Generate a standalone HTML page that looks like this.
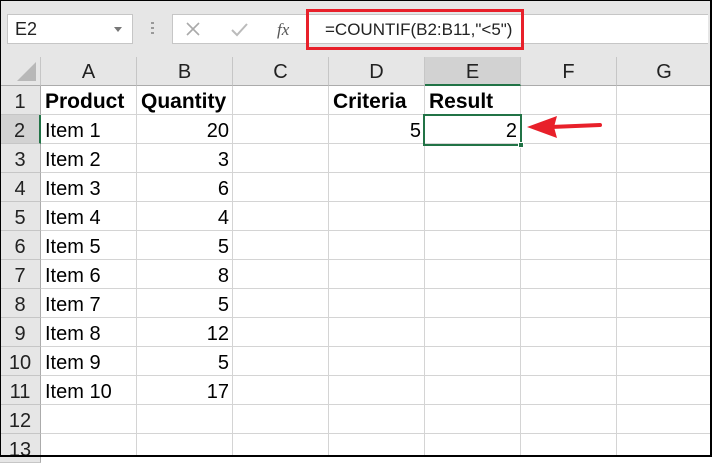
<!DOCTYPE html>
<html><head><style>
*{margin:0;padding:0;box-sizing:border-box}
body{width:712px;height:457px;overflow:hidden;background:#fff;font-family:"Liberation Sans",sans-serif;position:relative}
.frame{position:absolute;left:0;top:0;width:712px;height:457px;border:1px solid #000;border-right-width:2px;border-bottom-width:2px;z-index:20;pointer-events:none}
.top{position:absolute;left:0;top:0;width:712px;height:57px;background:#e6e6e6}
.box{position:absolute;background:#fff;border:1px solid #c6c6c6}
.ch{position:absolute;top:57px;height:29px;background:#e6e6e6;border-right:1px solid #c6c6c6;border-bottom:1px solid #ababab;text-align:center;font-size:20px;line-height:31px;color:#222}
.rh{position:absolute;left:0;width:41px;height:29px;background:#e6e6e6;border-bottom:1px solid #c6c6c6;border-right:1px solid #ababab;text-align:center;font-size:20px;line-height:32px;color:#222}
.c{position:absolute;height:29px;font-size:20px;line-height:32px;color:#000;padding:0 4px;white-space:nowrap}
.r{text-align:right}
.b{font-weight:bold;font-size:21px}
</style></head><body>
<div class="top"></div>
<div class="box" style="left:7px;top:14px;width:126px;height:30px;font-size:18px;line-height:29px;padding-left:7px;color:#222">E2<span style="position:absolute;right:10px;top:12px;border-left:4px solid transparent;border-right:4px solid transparent;border-top:5px solid #777"></span></div>
<div style="position:absolute;left:151px;top:22px;width:3px;height:14px;background:repeating-linear-gradient(#999 0 2px,transparent 2px 5px)"></div>
<div class="box" style="left:172px;top:14px;width:536px;height:30px;border-right:none"></div>
<svg style="position:absolute;left:185px;top:20px" width="120" height="20">
<path d="M2 3 L14 15 M14 3 L2 15" stroke="#aaa" stroke-width="1.6" fill="none"/>
<path d="M47 10 L52 15 L62 4" stroke="#bbb" stroke-width="2" fill="none"/>
<text x="92" y="15" font-family="Liberation Serif" font-style="italic" font-size="17" fill="#555">fx</text>
</svg>
<div style="position:absolute;left:306px;top:9px;width:218px;height:41px;border:3px solid #e8202a"></div>
<div style="position:absolute;left:325px;top:14px;font-size:17px;line-height:32px;color:#222">=COUNTIF(B2:B11,"&lt;5")</div>

<div style="position:absolute;left:0;top:57px;width:41px;height:29px;background:#e6e6e6;border-right:1px solid #c6c6c6;border-bottom:1px solid #ababab"></div>
<svg style="position:absolute;left:15px;top:60px" width="22" height="22"><polygon points="21,2 21,21 2,21" fill="#b8b8b8"/></svg>
<div class="ch" style="left:41px;width:96px">A</div>
<div class="ch" style="left:137px;width:96px">B</div>
<div class="ch" style="left:233px;width:96px">C</div>
<div class="ch" style="left:329px;width:96px">D</div>
<div class="ch" style="left:425px;width:96px;background:#d2d2d2;border-bottom:2px solid #217346">E</div>
<div class="ch" style="left:521px;width:96px">F</div>
<div class="ch" style="left:617px;width:95px">G</div>

<div style="position:absolute;left:41px;top:86px;width:671px;height:371px;background-image:linear-gradient(to right,#d4d4d4 1px,transparent 1px),linear-gradient(#d4d4d4 1px,transparent 1px);background-size:96px 29px;background-position:95px 28px"></div>

<div class="rh" style="top:86px">1</div>
<div class="rh" style="top:115px;background:#d2d2d2;border-right:2px solid #217346">2</div>
<div class="rh" style="top:144px">3</div>
<div class="rh" style="top:173px">4</div>
<div class="rh" style="top:202px">5</div>
<div class="rh" style="top:231px">6</div>
<div class="rh" style="top:260px">7</div>
<div class="rh" style="top:289px">8</div>
<div class="rh" style="top:318px">9</div>
<div class="rh" style="top:347px">10</div>
<div class="rh" style="top:376px">11</div>
<div class="rh" style="top:405px">12</div>
<div class="rh" style="top:434px">13</div>

<div class="c b" style="left:41px;top:86px">Product</div>
<div class="c b" style="left:137px;top:86px">Quantity</div>
<div class="c b" style="left:329px;top:86px">Criteria</div>
<div class="c b" style="left:425px;top:86px">Result</div>

<div class="c" style="left:41px;top:115px">Item 1</div><div class="c r" style="left:137px;top:115px;width:96px">20</div>
<div class="c" style="left:41px;top:144px">Item 2</div><div class="c r" style="left:137px;top:144px;width:96px">3</div>
<div class="c" style="left:41px;top:173px">Item 3</div><div class="c r" style="left:137px;top:173px;width:96px">6</div>
<div class="c" style="left:41px;top:202px">Item 4</div><div class="c r" style="left:137px;top:202px;width:96px">4</div>
<div class="c" style="left:41px;top:231px">Item 5</div><div class="c r" style="left:137px;top:231px;width:96px">5</div>
<div class="c" style="left:41px;top:260px">Item 6</div><div class="c r" style="left:137px;top:260px;width:96px">8</div>
<div class="c" style="left:41px;top:289px">Item 7</div><div class="c r" style="left:137px;top:289px;width:96px">5</div>
<div class="c" style="left:41px;top:318px">Item 8</div><div class="c r" style="left:137px;top:318px;width:96px">12</div>
<div class="c" style="left:41px;top:347px">Item 9</div><div class="c r" style="left:137px;top:347px;width:96px">5</div>
<div class="c" style="left:41px;top:376px">Item 10</div><div class="c r" style="left:137px;top:376px;width:96px">17</div>

<div class="c r" style="left:329px;top:115px;width:96px">5</div>
<div style="position:absolute;left:423px;top:114px;width:99px;height:32px;border:2px solid #217346"></div>
<div style="position:absolute;left:518px;top:142px;width:6px;height:6px;background:#217346;border:1px solid #fff"></div>
<div class="c r" style="left:425px;top:115px;width:96px">2</div>

<svg style="position:absolute;left:525px;top:112px" width="80" height="30">
<path d="M26 15 L75 13" stroke="#e8202a" stroke-width="4" stroke-linecap="round"/>
<polygon points="2,15 32,4 29,15 32,26" fill="#e8202a"/>
</svg>
<div class="frame"></div>
</body></html>
